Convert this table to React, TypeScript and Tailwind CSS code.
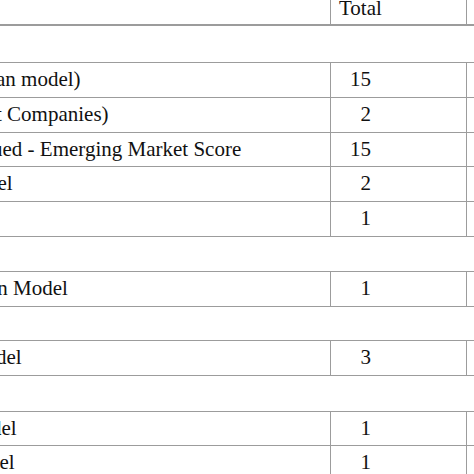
const line = 'border-[#9c9c9c]'

type Row =
  | { kind: 'section'; h: string }
  | { kind: 'data'; h: string; label: string; shift: string; total: string }

const rows: Row[] = [
  { kind: 'section', h: 'h-[37px]' },
  { kind: 'data', h: 'h-[35px]', label: 'an model)', shift: '-ml-[4px]', total: '15' },
  { kind: 'data', h: 'h-[35px]', label: 't Companies)', shift: '-ml-[4px]', total: '2' },
  { kind: 'data', h: 'h-[34px]', label: 'ued - Emerging Market Score', shift: '-ml-[8px]', total: '15' },
  { kind: 'data', h: 'h-[35px]', label: 'del', shift: '-ml-[13px]', total: '2' },
  { kind: 'data', h: 'h-[35px]', label: '', shift: 'ml-0', total: '1' },
  { kind: 'section', h: 'h-[35px]' },
  { kind: 'data', h: 'h-[35px]', label: 'an Model', shift: '-ml-[12px]', total: '1' },
  { kind: 'section', h: 'h-[34px]' },
  { kind: 'data', h: 'h-[35px]', label: 'del', shift: '-ml-[4px]', total: '3' },
  { kind: 'section', h: 'h-[36px]' },
  { kind: 'data', h: 'h-[34px]', label: 'del', shift: '-ml-[9px]', total: '1' },
  { kind: 'data', h: 'h-[35px]', label: 'del', shift: '-ml-[11px]', total: '1' },
]

export default function App() {
  return (
    <div className="w-[474px] h-[474px] overflow-hidden bg-white text-[#111] text-[21px] font-['Liberation_Serif','Times_New_Roman',serif]">
      {/* header */}
      <div className={`flex h-[26px] border-b-2 ${line}`}>
        <div className="w-[330px]" />
        <div className={`w-[136px] border-l ${line} pl-[8px] leading-[22px] -mt-[3px] pt-0`}>Total</div>
        <div className={`flex-1 border-l ${line}`} />
      </div>

      {rows.map((r, i) =>
        r.kind === 'section' ? (
          <div key={i} className={`${r.h} border-b ${line}`} />
        ) : (
          <div key={i} className={`flex ${r.h} border-b ${line}`}>
            <div className="w-[330px] overflow-hidden flex items-center whitespace-nowrap">
              <span className={r.shift}>{r.label}</span>
            </div>
            <div className={`w-[136px] border-l ${line} flex items-center`}>
              <span className="w-[40px] text-right">{r.total}</span>
            </div>
            <div className={`flex-1 border-l ${line}`} />
          </div>
        ),
      )}
    </div>
  )
}
